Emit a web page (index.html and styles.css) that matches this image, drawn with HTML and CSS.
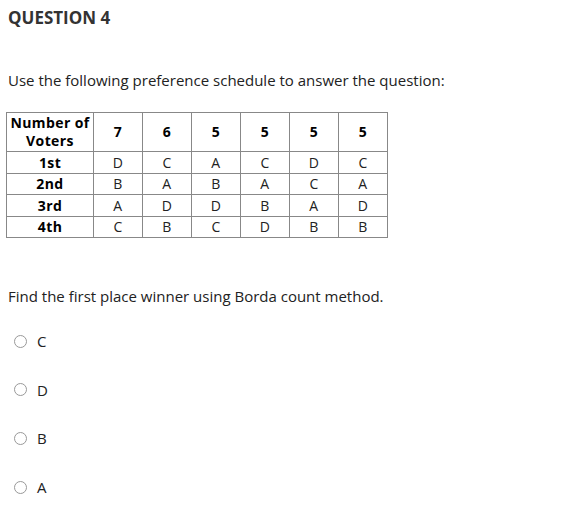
FILE: index.html
```html
<!DOCTYPE html>
<html>
<head>
<meta charset="utf-8">
<link rel="stylesheet" href="styles.css">
</head>
<body>
<div class="page">
  <h1 class="qtitle">QUESTION 4</h1>
  <p class="intro">Use the following preference schedule to answer the question:</p>
  <table class="sched">
    <tr class="head"><th class="lbl">Number of<br>Voters</th><th>7</th><th>6</th><th>5</th><th>5</th><th>5</th><th>5</th></tr>
    <tr><th class="lbl">1st</th><td>D</td><td>C</td><td>A</td><td>C</td><td>D</td><td>C</td></tr>
    <tr><th class="lbl">2nd</th><td>B</td><td>A</td><td>B</td><td>A</td><td>C</td><td>A</td></tr>
    <tr><th class="lbl">3rd</th><td>A</td><td>D</td><td>D</td><td>B</td><td>A</td><td>D</td></tr>
    <tr><th class="lbl">4th</th><td>C</td><td>B</td><td>C</td><td>D</td><td>B</td><td>B</td></tr>
  </table>
  <p class="ask">Find the first place winner using Borda count method.</p>
  <div class="options">
    <label class="opt"><span class="radio"></span><span>C</span></label>
    <label class="opt"><span class="radio"></span><span>D</span></label>
    <label class="opt"><span class="radio"></span><span>B</span></label>
    <label class="opt"><span class="radio"></span><span>A</span></label>
  </div>
</div>
</body>
</html>
```
FILE: styles.css
```css
html, body { margin: 0; padding: 0; background: #fff; }
body { font-family: "Open Sans", "DejaVu Sans", sans-serif; color: #222; }
.page { padding: 7px 8px 0 8px; }
.qtitle { margin: 0; font-size: 17px; font-weight: 700; color: #333; line-height: 22px; }
.intro { margin: 41px 0 0 0; font-size: 15px; line-height: 20px; }
.sched { margin: 22px 0 0 -2px; border-collapse: collapse; font-size: 14px; letter-spacing: 0.4px; }
.sched th, .sched td { border: 1px solid #888; text-align: center; padding: 0; height: 20.5px; line-height: 17px; width: 48px; }
.sched th { font-weight: 700; color: #000; }
.sched td { color: #222; }
.sched .lbl { width: 86px; }
.sched .head th { height: 38px; line-height: 18.5px; }
.ask { margin: 48px 0 0 0; font-size: 15px; line-height: 20px; }
.options { margin-top: 25px; display: flex; flex-direction: column; gap: 28.7px; }
.opt { display: flex; align-items: center; gap: 10px; font-size: 15px; line-height: 20px; padding-left: 6px; }
.radio { width: 13px; height: 13px; border: 1px solid #999; border-radius: 50%; box-sizing: border-box; background: #fff; }
```
